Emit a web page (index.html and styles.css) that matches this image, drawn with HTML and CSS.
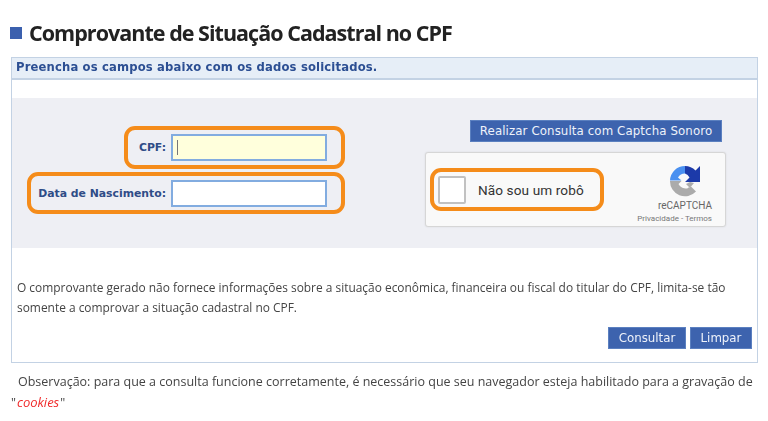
FILE: index.html
```html
<!DOCTYPE html>
<html lang="pt-BR">
<head>
<meta charset="utf-8">
<title>Comprovante de Situação Cadastral no CPF</title>
<link rel="stylesheet" href="styles.css">
</head>
<body>
<main class="page">
  <h1 class="title"><span class="bullet"></span>Comprovante de Situação Cadastral no CPF</h1>
  <section class="panel">
    <div class="panel-head">Preencha os campos abaixo com os dados solicitados.</div>
    <div class="band"></div>
    <div class="form-area">
      <div class="fields">
        <div class="field"><label class="label">CPF:</label><div class="input input-focus"><span class="caret"></span></div></div>
        <div class="field"><label class="label">Data de Nascimento:</label><div class="input"></div></div>
      </div>
      <div class="captcha-col">
        <button class="btn btn-audio">Realizar Consulta com Captcha Sonoro</button>
        <div class="recaptcha">
          <div class="check"></div>
          <div class="robot">Não sou um robô</div>
          <div class="brand">
            <svg class="logo" viewBox="0 0 32 32" width="32" height="32">
              <path d="M1 16 A15 15 0 0 0 27 26.5 L22 21.5 A8 8 0 0 1 9.5 19 L12.5 16 Z" fill="#ababab"/>
              <path d="M22 21.5 L25 18 L21 17 L17 19 L20 22 L18.5 24 Z" fill="#ababab"/>
              <path d="M16 1 A15 15 0 0 0 1 15.5 L12.5 15.5 L9 12.5 A8 8 0 0 1 16 8.5 Z" fill="#4a90f0"/>
              <path d="M16 1 A15 15 0 0 1 26.5 5.5 L31 1 L31 17 L16 17 L20.5 12.5 A8 8 0 0 0 16 8.5 Z" fill="#1c3aa9"/>
            </svg>
            <div class="brand-name">reCAPTCHA</div>
            <div class="brand-links">Privacidade - Termos</div>
          </div>
        </div>
      </div>
      <div class="mark mark-cpf"></div>
      <div class="mark mark-date"></div>
      <div class="mark mark-robot"></div>
    </div>
    <p class="notice">O comprovante gerado não fornece informações sobre a situação econômica, financeira ou fiscal do titular do CPF, limita-se tão somente a comprovar a situação cadastral no CPF.</p>
    <div class="actions">
      <button class="btn btn-go">Consultar</button>
      <button class="btn btn-clear">Limpar</button>
    </div>
  </section>
  <p class="note">Observação: para que a consulta funcione corretamente, é necessário que seu navegador esteja habilitado para a gravação de "<em class="red">cookies</em>"</p>
</main>
</body>
</html>
```

FILE: styles.css
```css
* { box-sizing: border-box; }
html, body { margin: 0; padding: 0; background: #fff; }
body { width: 768px; height: 421px; overflow: hidden; font-family: "Open Sans", sans-serif; color: #3a3a3a; }
.page { padding: 19px 10px 0 11px; filter: blur(0.35px); }
.title { display: flex; align-items: center; margin: 0 0 0 -1px; height: 27px; font-size: 21.5px; font-weight: 700; letter-spacing: -0.97px; color: #222; }
.bullet { width: 12px; height: 12px; margin-right: 7px; background: #3b60ae; }
.panel { margin-top: 11px; height: 306px; border: 1.5px solid #c3d2e4; display: flex; flex-direction: column; }
.panel-head { height: 22px; padding-left: 4px; background: #e6eef7; border-bottom: 2px solid #c3d2e4; font: bold 11.6px/19px "DejaVu Sans", sans-serif; letter-spacing: 0.16px; color: #2c4f93; }
.band { height: 18px; flex: none; }
.form-area { position: relative; display: flex; height: 150px; flex: none; background: #eeeff4; }
.fields { width: 315px; padding-top: 36px; display: flex; flex-direction: column; gap: 19px; flex: none; }
.field { display: flex; align-items: center; justify-content: flex-end; gap: 5px; }
.label { font: bold 10.85px "DejaVu Sans", sans-serif; color: #2f4c87; }
.input { width: 156px; height: 27px; background: #fff; border: 2px solid #82ace0; display: flex; align-items: center; padding-left: 4px; }
.input-focus { background: #ffffdc; }
.caret { width: 1px; height: 15px; background: #777; }
.captcha-col { margin-left: 97px; padding-top: 22px; display: flex; flex-direction: column; align-items: flex-end; width: 302px; }
.btn { border: 1px solid #5b80c0; background: #3d63ae; color: #eef2fa; font: 11.8px "DejaVu Sans", sans-serif; padding: 0; height: 22px; }
.btn-audio { width: 252px; margin-right: 4px; letter-spacing: 0.1px; }
.recaptcha { width: 301px; height: 75px; margin-top: 10px; background: #f9f9f9; border: 1px solid #d6d6d6; border-radius: 3px; display: flex; align-items: center; box-shadow: 0 0 2px rgba(0,0,0,.1); }
.check { width: 28px; height: 28px; margin-left: 12px; background: #fff; border: 2px solid #c1c1c1; border-radius: 2px; flex: none; }
.robot { margin-left: 12px; font: 13.6px Roboto, sans-serif; color: #333; letter-spacing: 0.1px; }
.brand { margin-left: auto; margin-right: 13px; display: flex; flex-direction: column; align-items: flex-end; width: 80px; padding-top: 10px; }
.logo { margin: 0 11px 3px 0; }
.brand-name { font: 10px Roboto, sans-serif; color: #666; line-height: 12px; }
.brand-links { font: 8px Roboto, sans-serif; color: #777; line-height: 13px; }
.mark { position: absolute; border: 4.5px solid #f58c1a; border-radius: 11px; }
.mark-cpf { left: 112px; top: 28px; width: 221px; height: 43px; }
.mark-date { left: 15px; top: 74px; width: 318px; height: 42px; }
.mark-robot { left: 418px; top: 70px; width: 174px; height: 43px; }
.notice { margin: 29px 0 0; padding: 0 5px; font-size: 11.93px; line-height: 20px; color: #444; }
.actions { margin-top: 10px; display: flex; justify-content: flex-end; gap: 4px; padding-right: 5px; }
.btn-go { width: 78px; }
.btn-clear { width: 62px; }
.note { margin: 9px 0 0; font-size: 12.5px; line-height: 20px; text-indent: 7px; color: #444; padding-right: 2px; }
.red { color: #f02b2b; font-size: 13px; padding: 0 1px; }
```
